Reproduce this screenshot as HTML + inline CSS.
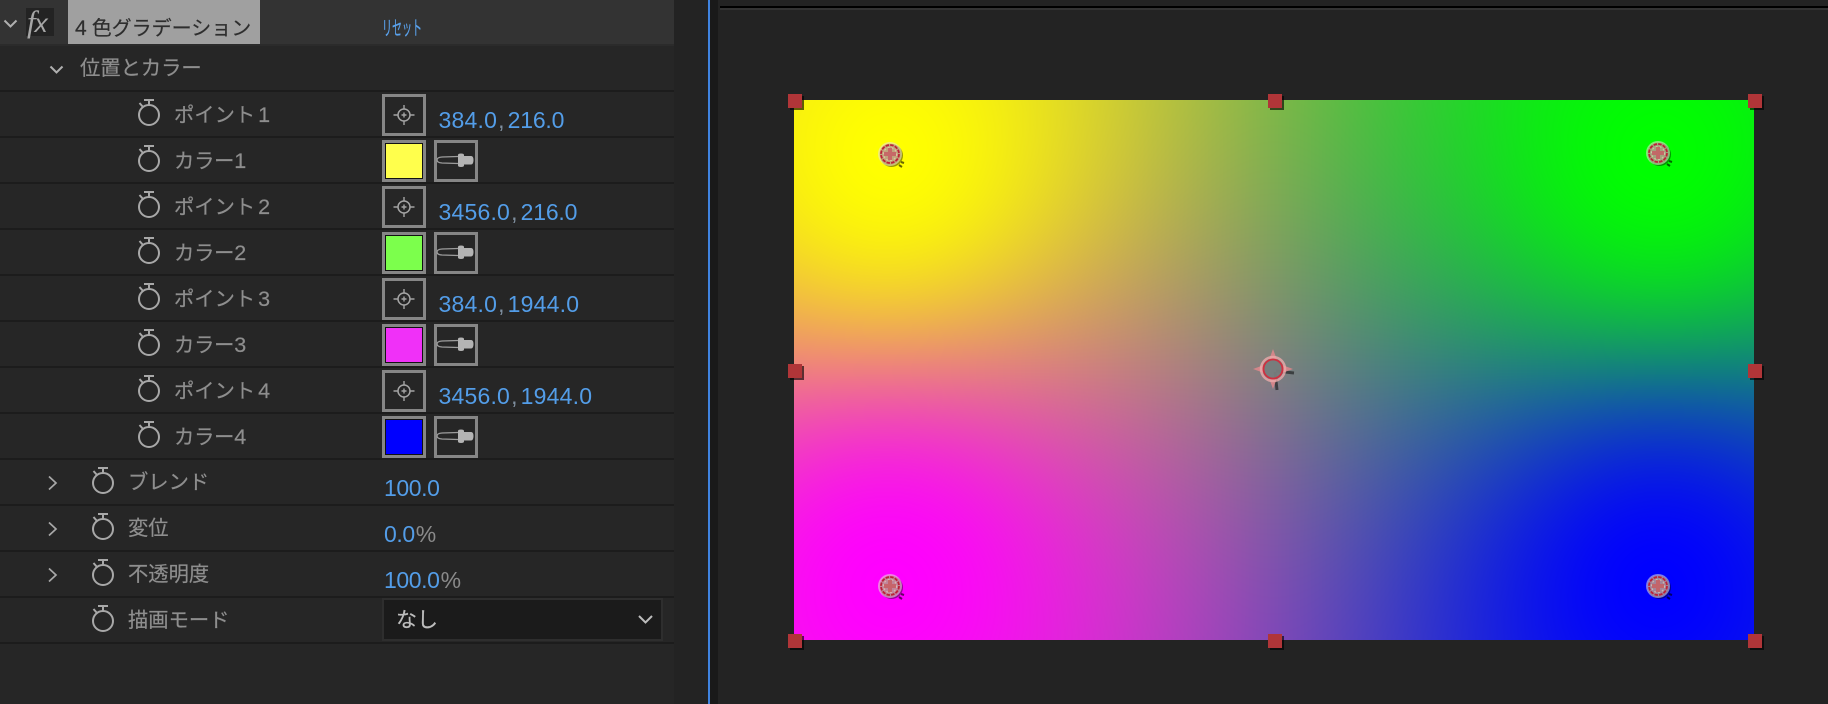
<!DOCTYPE html>
<html lang="ja">
<head>
<meta charset="utf-8">
<title>4色グラデーション</title>
<style>
html,body{margin:0;padding:0;background:#222;}
body{position:relative;width:1828px;height:704px;overflow:hidden;font-family:"Liberation Sans","Noto Sans CJK JP",sans-serif;}
.a{position:absolute;}
.t{position:absolute;white-space:nowrap;font-size:20.3px;line-height:30px;height:30px;color:#8e8e8e;-webkit-text-stroke:.2px #8e8e8e;}
.t em{font-style:normal;font-size:21.5px;}
.v{position:absolute;white-space:nowrap;font-size:23px;line-height:30px;height:30px;color:#539de8;letter-spacing:.2px;}
.v i{font-style:normal;color:#7f8f9f;margin:0 3px 0 1px;}
.v b{font-weight:normal;color:#8a8a8a;margin-left:1px;}
.v u{text-decoration:none;letter-spacing:-.2px;}
.line{position:absolute;left:0;width:674px;height:2px;background:#1c1c1c;}
.box{position:absolute;box-sizing:border-box;width:44px;height:42px;border:3px solid #868686;}
.sw{position:absolute;box-sizing:border-box;left:385px;width:38px;height:36px;border:1px solid #111;}
.h{position:absolute;width:14px;height:14px;background:#b03538;box-shadow:2px 2px 0 rgba(0,0,0,.62);}
svg{position:absolute;overflow:visible;}
</style>
</head>
<body>
<svg width="0" height="0" style="left:0;top:0">
  <defs>
    <symbol id="watch" viewBox="0 0 26 30" overflow="visible">
      <circle cx="12" cy="17" r="10" fill="none" stroke="#a8a8a8" stroke-width="2"/>
      <path d="M7 2H17M12 2V7M2.500 5L6 9" fill="none" stroke="#a8a8a8" stroke-width="2"/>
    </symbol>
    <symbol id="target" viewBox="0 0 24 24" overflow="visible">
      <circle cx="12" cy="12" r="6" fill="none" stroke="#a4a4a4" stroke-width="1.500"/>
      <path d="M1.500 12H6M18 12H22.500M12 2V6M12 18V22M9.500 12H14.500M12 9.500V14.500" fill="none" stroke="#a4a4a4" stroke-width="1.400"/>
    </symbol>
    <symbol id="drop" viewBox="0 0 38 14" overflow="visible">
      <path d="M22 3.500L6 4C2.500 4.200 1 5.500 1 7C1 8.500 2.500 9.800 6 10L22 10.500" fill="none" stroke="#9c9c9c" stroke-width="1.300"/>
      <path d="M22 2C22 1 23 0.500 25 0.500C27 0.500 28 1 28 2V3H35C37 3 37.500 5 37.500 7C37.500 9 37 11.500 35 11.500H28V12.500C28 13.500 27 14 25 14C23 14 22 13.500 22 12.500Z" fill="#b4b4b4"/>
    </symbol>
    <symbol id="pt" viewBox="0 0 30 30" overflow="visible">
      <path d="M24 26L27 28M26 23L29 24" stroke="rgba(0,0,0,.6)" stroke-width="2"/>
      <circle cx="16.500" cy="16.500" r="11.500" fill="rgba(0,0,0,.4)"/>
      <circle cx="15" cy="15" r="12" fill="rgba(235,225,215,.55)"/>
      <circle cx="15" cy="15" r="10.500" fill="rgba(190,140,130,.55)"/>
      <circle cx="15" cy="15" r="9" fill="none" stroke="#bb2238" stroke-width="1.800" stroke-dasharray="3.500 1.200"/>
      <circle cx="15" cy="15" r="6.500" fill="none" stroke="rgba(240,225,190,.55)" stroke-width="1.200" stroke-dasharray="2 2"/>
      <path d="M9 15H21M15 9V21" stroke="rgba(200,95,100,.85)" stroke-width="4"/>
    </symbol>
  </defs>
</svg>

<!-- panels -->
<div class="a" style="left:0;top:0;width:674px;height:704px;background:#262626"></div>
<div class="a" style="left:674px;top:0;width:34px;height:704px;background:#232323"></div>
<div class="a" style="left:0;top:0;width:674px;height:46px;background:#333"></div>
<div class="a" style="left:708px;top:0;width:2px;height:704px;background:#3f83e0"></div>
<div class="a" style="left:710px;top:0;width:8px;height:704px;background:#191919"></div>
<div class="a" style="left:718px;top:0;width:1110px;height:704px;background:#232323"></div>
<div class="a" style="left:720px;top:6px;width:1108px;height:2px;background:#000"></div>
<div class="a" style="left:720px;top:8px;width:1108px;height:2px;background:#333"></div>

<!-- header -->
<svg style="left:3px;top:19px" width="16" height="10"><path d="M1.500 1.500L7.500 7.500L13.500 1.500" fill="none" stroke="#b0b0b0" stroke-width="2"/></svg>
<div class="a" style="left:26px;top:8px;width:28px;height:28px;background:#232323"></div>
<div class="a" style="left:27px;top:7px;height:30px;white-space:nowrap;color:#a6a6a6;font:italic 31px/30px 'Liberation Serif',serif">f<span style="font:italic 26px/30px 'Liberation Sans',sans-serif;margin-left:-1px">x</span></div>
<div class="a" style="left:68px;top:0;width:192px;height:44px;background:#a0a0a0"></div>
<div class="t" style="left:75px;top:14px;color:#2e2e2e;-webkit-text-stroke:.2px #2e2e2e;font-size:21px">4<span style="margin-left:5px;font-size:20px">色グラデーション</span></div>
<div class="t" style="left:382px;top:14px;color:#5aa2ec;-webkit-text-stroke:.2px #5aa2ec;font-size:20px;transform-origin:0 50%;transform:scaleX(.5)">リセット</div>

<div class="a" style="left:0;top:44px;width:674px;height:2px;background:#2b2b2b"></div>
<svg style="left:49px;top:65px" width="16" height="10"><path d="M1.500 1.500L7.500 7.500L13.500 1.500" fill="none" stroke="#b0b0b0" stroke-width="2"/></svg>
<div class="t" style="left:80px;top:54px">位置とカラー</div>

<!-- separators -->
<div class="line" style="top:90px"></div>
<div class="line" style="top:136px"></div>
<div class="line" style="top:182px"></div>
<div class="line" style="top:228px"></div>
<div class="line" style="top:274px"></div>
<div class="line" style="top:320px"></div>
<div class="line" style="top:366px"></div>
<div class="line" style="top:412px"></div>
<div class="line" style="top:458px"></div>
<div class="line" style="top:504px"></div>
<div class="line" style="top:550px"></div>
<div class="line" style="top:596px"></div>
<div class="line" style="top:642px"></div>

<!-- stopwatches: upper -->
<svg style="left:137px;top:98px" width="26" height="30"><use href="#watch"/></svg>
<svg style="left:137px;top:144px" width="26" height="30"><use href="#watch"/></svg>
<svg style="left:137px;top:190px" width="26" height="30"><use href="#watch"/></svg>
<svg style="left:137px;top:236px" width="26" height="30"><use href="#watch"/></svg>
<svg style="left:137px;top:282px" width="26" height="30"><use href="#watch"/></svg>
<svg style="left:137px;top:328px" width="26" height="30"><use href="#watch"/></svg>
<svg style="left:137px;top:374px" width="26" height="30"><use href="#watch"/></svg>
<svg style="left:137px;top:420px" width="26" height="30"><use href="#watch"/></svg>
<!-- stopwatches: lower -->
<svg style="left:91px;top:466px" width="26" height="30"><use href="#watch"/></svg>
<svg style="left:91px;top:512px" width="26" height="30"><use href="#watch"/></svg>
<svg style="left:91px;top:558px" width="26" height="30"><use href="#watch"/></svg>
<svg style="left:91px;top:604px" width="26" height="30"><use href="#watch"/></svg>

<!-- labels -->
<div class="t" style="left:174px;top:100px">ポイント<em style="margin-left:3px">1</em></div>
<div class="t" style="left:174px;top:146px;letter-spacing:-.2px">カラー<em>1</em></div>
<div class="t" style="left:174px;top:192px">ポイント<em style="margin-left:3px">2</em></div>
<div class="t" style="left:174px;top:238px;letter-spacing:-.2px">カラー<em>2</em></div>
<div class="t" style="left:174px;top:284px">ポイント<em style="margin-left:3px">3</em></div>
<div class="t" style="left:174px;top:330px;letter-spacing:-.2px">カラー<em>3</em></div>
<div class="t" style="left:174px;top:376px">ポイント<em style="margin-left:3px">4</em></div>
<div class="t" style="left:174px;top:422px;letter-spacing:-.2px">カラー<em>4</em></div>
<div class="t" style="left:128px;top:468px">ブレンド</div>
<div class="t" style="left:128px;top:514px">変位</div>
<div class="t" style="left:128px;top:560px">不透明度</div>
<div class="t" style="left:128px;top:606px">描画モード</div>

<!-- target boxes + icons -->
<div class="box" style="left:382px;top:94px"></div>
<svg style="left:392px;top:103px" width="24" height="24"><use href="#target"/></svg>
<div class="box" style="left:382px;top:186px"></div>
<svg style="left:392px;top:195px" width="24" height="24"><use href="#target"/></svg>
<div class="box" style="left:382px;top:278px"></div>
<svg style="left:392px;top:287px" width="24" height="24"><use href="#target"/></svg>
<div class="box" style="left:382px;top:370px"></div>
<svg style="left:392px;top:379px" width="24" height="24"><use href="#target"/></svg>

<!-- color swatches and eyedroppers -->
<div class="box" style="left:382px;top:140px"></div>
<div class="sw" style="top:143px;background:#ffff4c"></div>
<div class="box" style="left:434px;top:140px"></div>
<svg style="left:436px;top:153px" width="38" height="14"><use href="#drop"/></svg>

<div class="box" style="left:382px;top:232px"></div>
<div class="sw" style="top:235px;background:#7cff4c"></div>
<div class="box" style="left:434px;top:232px"></div>
<svg style="left:436px;top:245px" width="38" height="14"><use href="#drop"/></svg>

<div class="box" style="left:382px;top:324px"></div>
<div class="sw" style="top:327px;background:#f030f8"></div>
<div class="box" style="left:434px;top:324px"></div>
<svg style="left:436px;top:337px" width="38" height="14"><use href="#drop"/></svg>

<div class="box" style="left:382px;top:416px"></div>
<div class="sw" style="top:419px;background:#0000ff"></div>
<div class="box" style="left:434px;top:416px"></div>
<svg style="left:436px;top:429px" width="38" height="14"><use href="#drop"/></svg>

<!-- values -->
<div class="v" style="left:438.500px;top:105px">384.0<i>,</i><u>216.0</u></div>
<div class="v" style="left:438.500px;top:197px">3456.0<i>,</i><u>216.0</u></div>
<div class="v" style="left:438.500px;top:289px">384.0<i>,</i>1944.0</div>
<div class="v" style="left:438.500px;top:381px">3456.0<i>,</i>1944.0</div>
<div class="v" style="left:384px;top:473px;letter-spacing:-.4px">100.0</div>
<div class="v" style="left:384px;top:519px;letter-spacing:-.4px">0.0<b>%</b></div>
<div class="v" style="left:384px;top:565px;letter-spacing:-.4px">100.0<b>%</b></div>

<!-- disclosure arrows -->
<svg style="left:47px;top:475px" width="12" height="16"><path d="M2 1.500L9 8L2 14.500" fill="none" stroke="#a8a8a8" stroke-width="1.700"/></svg>
<svg style="left:47px;top:521px" width="12" height="16"><path d="M2 1.500L9 8L2 14.500" fill="none" stroke="#a8a8a8" stroke-width="1.700"/></svg>
<svg style="left:47px;top:567px" width="12" height="16"><path d="M2 1.500L9 8L2 14.500" fill="none" stroke="#a8a8a8" stroke-width="1.700"/></svg>

<!-- dropdown -->
<div class="a" style="left:382px;top:598px;width:281px;height:43px;box-sizing:border-box;background:#1b1b1b;border:2px solid #2e2e2e"></div>
<div class="t" style="left:396px;top:606px;color:#bdbdbd;-webkit-text-stroke:.2px #bdbdbd;font-size:21px">なし</div>
<svg style="left:637px;top:614px" width="17" height="11"><path d="M2 2L8.500 8.500L15 2" fill="none" stroke="#bdbdbd" stroke-width="2"/></svg>

<!-- gradient image -->
<div class="a" style="left:794px;top:100px;width:960px;height:540px;background:linear-gradient(90deg,rgba(255,255,0,1),rgba(0,255,0,1))"></div>
<canvas id="g" width="960" height="540" class="a" style="left:794px;top:100px;width:960px;height:540px"></canvas>
<script>
(function(){
  var c=document.getElementById('g'),x=c.getContext('2d'),W=960,H=540;
  var im=x.createImageData(W,H),d=im.data;
  var P=[[96,54,255,255,0],[864,54,0,255,0],[96,486,255,0,255],[864,486,0,0,255]];
  for(var j=0;j<H;j++){for(var i=0;i<W;i++){
    var s=0,r=0,g=0,b=0;
    for(var k=0;k<4;k++){
      var p=P[k],dx=i+.5-p[0],dy=j+.5-p[1],w=1/(dx*dx+dy*dy+1);
      s+=w;r+=w*p[2];g+=w*p[3];b+=w*p[4];
    }
    var o=(j*W+i)*4;
    d[o]=r/s;d[o+1]=g/s;d[o+2]=b/s;d[o+3]=255;
  }}
  x.putImageData(im,0,0);
})();
</script>

<!-- point markers -->
<svg style="left:875px;top:139px" width="30" height="30"><use href="#pt"/></svg>
<svg style="left:1643px;top:138px" width="30" height="30"><use href="#pt"/></svg>
<svg style="left:875px;top:571px" width="30" height="30"><use href="#pt"/></svg>
<svg style="left:1643px;top:571px" width="30" height="30"><use href="#pt"/></svg>

<!-- centre marker -->
<svg style="left:1250px;top:346px" width="46" height="46">
  <path d="M25 26L27 44M26 25L44 27" stroke="rgba(0,0,0,.5)" stroke-width="3"/>
  <path d="M23 3L27 14H19ZM23 43L27 32H19ZM3 23L14 19V27ZM43 23L32 19V27Z" fill="rgba(225,135,140,.85)"/>
  <circle cx="23" cy="23" r="12" fill="none" stroke="rgba(235,170,170,.8)" stroke-width="2.500"/>
  <circle cx="23" cy="23" r="9.500" fill="rgba(118,125,125,.95)" stroke="#cf3040" stroke-width="1.800"/>
</svg>

<!-- handles -->
<div class="h" style="left:788px;top:94px"></div>
<div class="h" style="left:1268px;top:94px"></div>
<div class="h" style="left:1748px;top:94px"></div>
<div class="h" style="left:788px;top:364px"></div>
<div class="h" style="left:1748px;top:364px"></div>
<div class="h" style="left:788px;top:634px"></div>
<div class="h" style="left:1268px;top:634px"></div>
<div class="h" style="left:1748px;top:634px"></div>
</body>
</html>
